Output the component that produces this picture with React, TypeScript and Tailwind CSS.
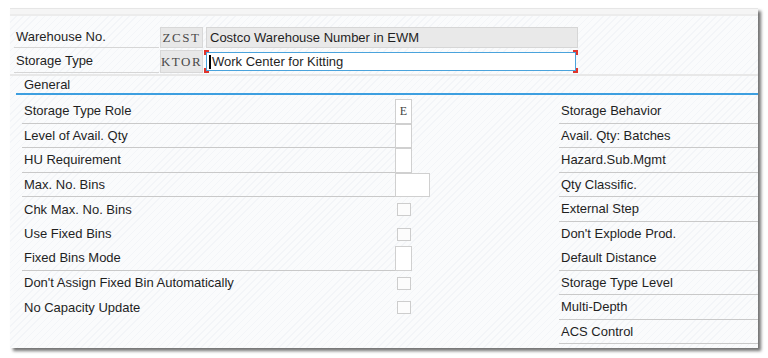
import React from 'react';

type LeftRow = { label: string; kind: 'box' | 'wide' | 'check'; value?: string };

const leftRows: LeftRow[] = [
  { label: 'Storage Type Role', kind: 'box', value: 'E' },
  { label: 'Level of Avail. Qty', kind: 'box' },
  { label: 'HU Requirement', kind: 'box' },
  { label: 'Max. No. Bins', kind: 'wide' },
  { label: 'Chk Max. No. Bins', kind: 'check' },
  { label: 'Use Fixed Bins', kind: 'check' },
  { label: 'Fixed Bins Mode', kind: 'box' },
  { label: "Don't Assign Fixed Bin Automatically", kind: 'check' },
  { label: 'No Capacity Update', kind: 'check' },
];

const rightRows: { label: string; line: boolean }[] = [
  { label: 'Storage Behavior', line: true },
  { label: 'Avail. Qty: Batches', line: true },
  { label: 'Hazard.Sub.Mgmt', line: true },
  { label: 'Qty Classific.', line: true },
  { label: 'External Step', line: true },
  { label: "Don't Explode Prod.", line: false },
  { label: 'Default Distance', line: true },
  { label: 'Storage Type Level', line: true },
  { label: 'Multi-Depth', line: true },
  { label: 'ACS Control', line: true },
];

const Corner: React.FC<{ pos: string }> = ({ pos }) => (
  <span className={`absolute w-[5px] h-[5px] border-[#e0342c] ${pos}`} />
);

const App: React.FC = () => {
  return (
    <div className="w-[768px] h-[358px] bg-white font-['Liberation_Sans',Arial,sans-serif] text-[13px] text-[#1f1f1f] pt-[8px] pl-[10px]">
      <div className="w-[748px] h-[340px] flex flex-col bg-[repeating-linear-gradient(135deg,#fafbfc_0px,#fafbfc_4px,#f3f5f8_4px,#f3f5f8_5px)] shadow-[3px_3px_3px_rgba(0,0,0,0.55)] border-t border-[#e6e6e6]">
        {/* title strip */}
        <div className="h-[7px] bg-[#f5f5f5] border-b-2 border-[#ececec]" />

        {/* header fields */}
        <div className="pt-[11px] pl-[4px] flex flex-col gap-[2px]">
          <div className="flex items-stretch h-[21px]">
            <div className="w-[145px] border-b border-[#d6d6d6] pl-[2px] flex items-center">Warehouse No.</div>
            <div className="w-[43px] ml-[1px] bg-[#e8e8e8] border border-[#d8d8d8] flex items-center justify-center font-['Liberation_Serif',serif] tracking-[1.5px] text-[13px] text-[#4a4a4a]">ZCST</div>
            <div className="w-[372px] ml-[3px] bg-[#e9e9e9] border border-[#d6d6d6] flex items-center pl-[3px]">Costco Warehouse Number in EWM</div>
          </div>
          <div className="flex items-stretch h-[23px]">
            <div className="w-[145px] border-b border-[#d6d6d6] pl-[2px] flex items-center">Storage Type</div>
            <div className="w-[43px] ml-[1px] bg-[#e8e8e8] border border-[#d8d8d8] flex items-center justify-center font-['Liberation_Serif',serif] tracking-[1.5px] text-[13px] text-[#4a4a4a]">KTOR</div>
            <div className="relative w-[374px] ml-[1px] p-[2px]">
              <div className="h-full bg-white border border-[#4aa3dc] flex items-center pl-[2px]">
                <span className="w-[2px] h-[14px] bg-black mr-[1px]" />
                Work Center for Kitting
              </div>
              <Corner pos="top-0 left-0 border-t-2 border-l-2" />
              <Corner pos="bottom-0 left-0 border-b-2 border-l-2" />
              <Corner pos="top-0 right-0 border-t-2 border-r-2" />
              <Corner pos="bottom-0 right-0 border-b-2 border-r-2" />
            </div>
          </div>
        </div>

        <div className="mt-[1px] h-[2px] bg-[#e8e8e8]" />

        {/* General panel */}
        <div className="ml-[6px] flex-1 flex flex-col">
          <div className="h-[17px] pl-[8px] flex items-center">General</div>
          <div className="h-[2px] bg-[#3d9fe0]" />
          <div className="flex pt-[4px]">
            <div className="ml-[6px] w-[410px] flex flex-col">
              {leftRows.map((r) => (
                <div key={r.label} className="h-[24.55px] flex items-stretch">
                  <div
                    className={`w-[373px] pl-[2px] flex items-center ${r.kind === 'check' ? '' : 'border-b border-[#c9c9c9]'}`}
                  >
                    {r.label}
                  </div>
                  {r.kind === 'check' ? (
                    <div className="flex items-center pl-[2px]">
                      <span className="w-[14px] h-[13px] bg-[#fcfcfc] border border-[#cdcdcd]" />
                    </div>
                  ) : (
                    <div
                      className={`${r.kind === 'wide' ? 'w-[35px]' : 'w-[17px]'} bg-white border border-[#d0d0d0] flex items-center justify-center font-['Liberation_Serif',serif] text-[12px] text-[#444]`}
                    >
                      {r.value}
                    </div>
                  )}
                </div>
              ))}
            </div>
            <div className="ml-[127px] flex-1 flex flex-col">
              {rightRows.map((r) => (
                <div
                  key={r.label}
                  className={`h-[24.55px] pl-[2px] flex items-center ${r.line ? 'border-b border-[#c9c9c9]' : ''}`}
                >
                  {r.label}
                </div>
              ))}
            </div>
          </div>
        </div>
      </div>
    </div>
  );
};

export default App;
